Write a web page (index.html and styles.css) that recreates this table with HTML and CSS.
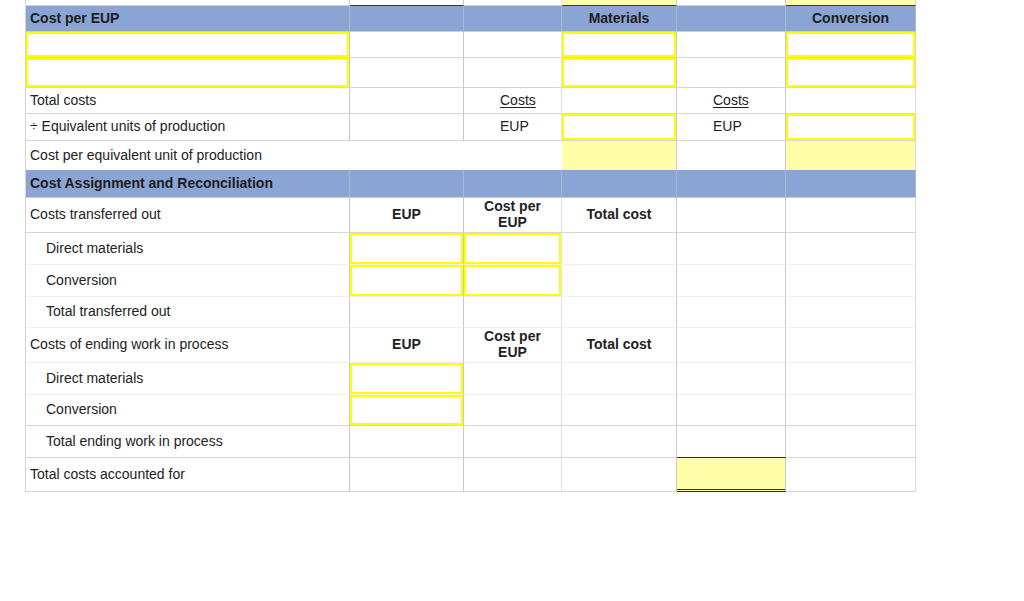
FILE: index.html
```html
<!DOCTYPE html>
<html>
<head>
<meta charset="utf-8">
<link rel="stylesheet" href="styles.css">
</head>
<body>
<div class="sheet">
  <div class="row r6">
    <div class="c top"></div>
    <div class="c top dk"></div>
    <div class="c top c3"></div>
    <div class="c top dk fill"></div>
    <div class="c top"></div>
    <div class="c top dk fill c6"></div>
  </div>
  <div class="row r26 head">
    <div class="c b pl">Cost per EUP</div>
    <div class="c"></div>
    <div class="c c3"></div>
    <div class="c b ctr">Materials</div>
    <div class="c"></div>
    <div class="c b ctr c6">Conversion</div>
  </div>
  <div class="row r26">
    <div class="c"><div class="box"></div></div>
    <div class="c"></div>
    <div class="c c3"></div>
    <div class="c"><div class="box"></div></div>
    <div class="c"></div>
    <div class="c c6"><div class="box"></div></div>
  </div>
  <div class="row r30">
    <div class="c"><div class="box"></div></div>
    <div class="c"></div>
    <div class="c c3"></div>
    <div class="c"><div class="box"></div></div>
    <div class="c"></div>
    <div class="c c6"><div class="box"></div></div>
  </div>
  <div class="row r26">
    <div class="c pl">Total costs</div>
    <div class="c"></div>
    <div class="c c3 lbl"><span class="u">Costs</span></div>
    <div class="c"></div>
    <div class="c lbl"><span class="u">Costs</span></div>
    <div class="c c6"></div>
  </div>
  <div class="row r27">
    <div class="c pl">÷ Equivalent units of production</div>
    <div class="c"></div>
    <div class="c c3 lbl">EUP</div>
    <div class="c"><div class="box"></div></div>
    <div class="c lbl">EUP</div>
    <div class="c c6"><div class="box"></div></div>
  </div>
  <div class="row r29">
    <div class="c pl span3 nb">Cost per equivalent unit of production</div>
    <div class="c fill nb nbr"></div>
    <div class="c nb"></div>
    <div class="c fill nb c6"></div>
  </div>
  <div class="row r28 head">
    <div class="c b pl">Cost Assignment and Reconciliation</div>
    <div class="c"></div>
    <div class="c c3"></div>
    <div class="c"></div>
    <div class="c"></div>
    <div class="c c6"></div>
  </div>
  <div class="row r35">
    <div class="c pl">Costs transferred out</div>
    <div class="c b ctr">EUP</div>
    <div class="c b ctr c3">Cost per<br>EUP</div>
    <div class="c b ctr">Total cost</div>
    <div class="c"></div>
    <div class="c c6"></div>
  </div>
  <div class="row r32">
    <div class="c ind lt">Direct materials</div>
    <div class="c lt"><div class="box"></div></div>
    <div class="c lt c3"><div class="box"></div></div>
    <div class="c lt"></div>
    <div class="c lt"></div>
    <div class="c lt c6"></div>
  </div>
  <div class="row r32">
    <div class="c ind lt">Conversion</div>
    <div class="c lt"><div class="box"></div></div>
    <div class="c lt c3"><div class="box"></div></div>
    <div class="c lt"></div>
    <div class="c lt"></div>
    <div class="c lt c6"></div>
  </div>
  <div class="row r31">
    <div class="c ind lt">Total transferred out</div>
    <div class="c lt"></div>
    <div class="c lt c3"></div>
    <div class="c lt"></div>
    <div class="c lt"></div>
    <div class="c lt c6"></div>
  </div>
  <div class="row r35">
    <div class="c pl lt">Costs of ending work in process</div>
    <div class="c b ctr lt">EUP</div>
    <div class="c b ctr lt c3">Cost per<br>EUP</div>
    <div class="c b ctr lt">Total cost</div>
    <div class="c lt"></div>
    <div class="c lt c6"></div>
  </div>
  <div class="row r32">
    <div class="c ind lt">Direct materials</div>
    <div class="c lt"><div class="box"></div></div>
    <div class="c lt c3"></div>
    <div class="c lt"></div>
    <div class="c lt"></div>
    <div class="c lt c6"></div>
  </div>
  <div class="row r31">
    <div class="c ind">Conversion</div>
    <div class="c"><div class="box"></div></div>
    <div class="c c3"></div>
    <div class="c"></div>
    <div class="c"></div>
    <div class="c c6"></div>
  </div>
  <div class="row r32">
    <div class="c ind">Total ending work in process</div>
    <div class="c"></div>
    <div class="c c3"></div>
    <div class="c"></div>
    <div class="c dkb"></div>
    <div class="c c6"></div>
  </div>
  <div class="row r34">
    <div class="c pl">Total costs accounted for</div>
    <div class="c"></div>
    <div class="c c3"></div>
    <div class="c"></div>
    <div class="c fill dbl"></div>
    <div class="c c6"></div>
  </div>
</div>
</body>
</html>
```

FILE: styles.css
```css
html, body {
  margin: 0;
  padding: 0;
  background: #ffffff;
}

body {
  font-family: "Liberation Sans", Arial, sans-serif;
  font-size: 14px;
  color: #222222;
}

.sheet {
  margin-left: 25px;
  width: 890px;
  border-left: 1px solid #d4d4d4;
}

.row {
  display: grid;
  grid-template-columns: 324px 114px 98px 115px 109px 130px;
}

.r6 { height: 6px; }
.r26 { height: 26px; }
.r27 { height: 27px; }
.r28 { height: 28px; }
.r29 { height: 29px; }
.r30 { height: 30px; }
.r31 { height: 31px; }
.r32 { height: 32px; }
.r34 { height: 34px; }
.r35 { height: 35px; }

.c {
  box-sizing: border-box;
  border-right: 1px solid #c9c9c9;
  border-bottom: 1px solid #d6d6d6;
  display: flex;
  align-items: center;
  min-width: 0;
  white-space: nowrap;
  padding-bottom: 2px;
}

.c3 { border-right-color: #e2e2e2; }
.c6 { border-right-color: #dadada; }

.top { border-bottom-color: #d0d0d0; padding-bottom: 0; }
.dk { border-bottom-color: #3a3a3a; }
.dkb { border-bottom-color: #2e2e2e; }

.fill { background: #ffffaa; }

.head .c {
  background: #8aa5d3;
  border-right-color: #a9b8d2;
  border-bottom-color: #c8cdd6;
  color: #1c1c1c;
}

.b { font-weight: bold; }

.pl { padding-left: 4px; }
.ind { padding-left: 20px; }
.lbl { padding-left: 36px; }

.ctr {
  justify-content: center;
  text-align: center;
  line-height: 16px;
}

.u {
  text-decoration: underline;
  text-underline-offset: 2px;
}

.lt { border-bottom-color: #efefef; }

.span3 { grid-column: span 3; border-right: none; }
.nb { border-bottom: none; }
.nbr { border-right-color: #c9c9c9; }

.box {
  align-self: stretch;
  flex: 1;
  border: 2px solid #ffff00;
  margin-bottom: -2px;
}

.dbl {
  border-bottom: 3px double #2e2e2e;
}
```
